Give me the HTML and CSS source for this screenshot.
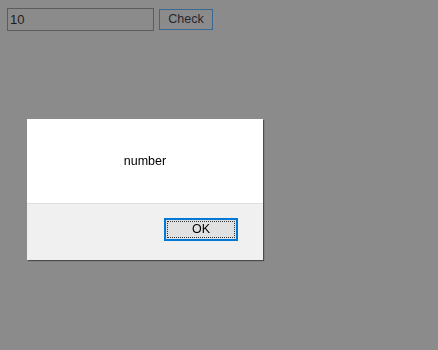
FILE: index.html
```html
<!DOCTYPE html>
<html>
<head>
<meta charset="utf-8">
<link rel="stylesheet" href="styles.css">
</head>
<body>
<div class="page">
  <div class="field">10</div>
  <div class="check">Check</div>
</div>
<div class="overlay">
  <div class="dialog">
    <div class="msg">number</div>
    <div class="foot">
      <div class="ok"><span class="ring">OK</span></div>
    </div>
  </div>
</div>
</body>
</html>
```
FILE: styles.css
```css
html, body { margin: 0; padding: 0; }
body {
  width: 438px;
  height: 350px;
  background: #8b8b8b;
  font-family: "Liberation Sans", Arial, sans-serif;
  overflow: hidden;
}
.page {
  display: flex;
  align-items: center;
  gap: 5px;
  padding: 8px 0 0 7px;
}
.field {
  box-sizing: border-box;
  width: 147px;
  height: 23px;
  border: 1px solid #5c5c5c;
  padding: 0 2px;
  font-size: 13px;
  line-height: 21px;
  color: #1e1e1e;
}
.check {
  box-sizing: border-box;
  width: 54px;
  height: 21px;
  border: 1px solid #3a6890;
  font-size: 12.5px;
  line-height: 19px;
  text-align: center;
  color: #262630;
}
.overlay {
  position: fixed;
  inset: 0;
  padding: 119px 0 0 27px;
}
.dialog {
  width: 236px;
  height: 141px;
  background: #f0f0f0;
  box-shadow: 1px 1px 1px rgba(0,0,0,0.45);
  display: flex;
  flex-direction: column;
}
.msg {
  height: 85px;
  background: #fff;
  border-bottom: 1px solid #dfdfdf;
  text-align: center;
  font-size: 12.5px;
  line-height: 14px;
  padding-top: 35px;
  box-sizing: border-box;
  color: #000;
}
.foot {
  display: flex;
  justify-content: flex-end;
  padding: 14px 25px 0 0;
}
.ok {
  box-sizing: border-box;
  width: 74px;
  height: 23px;
  border: 2px solid #0078d7;
  background: #e1e1e1;
  padding: 1px;
  display: flex;
}
.ring {
  flex: 1;
  border: 1px dotted #333;
  font-size: 12.5px;
  line-height: 15px;
  text-align: center;
  color: #000;
}
```
